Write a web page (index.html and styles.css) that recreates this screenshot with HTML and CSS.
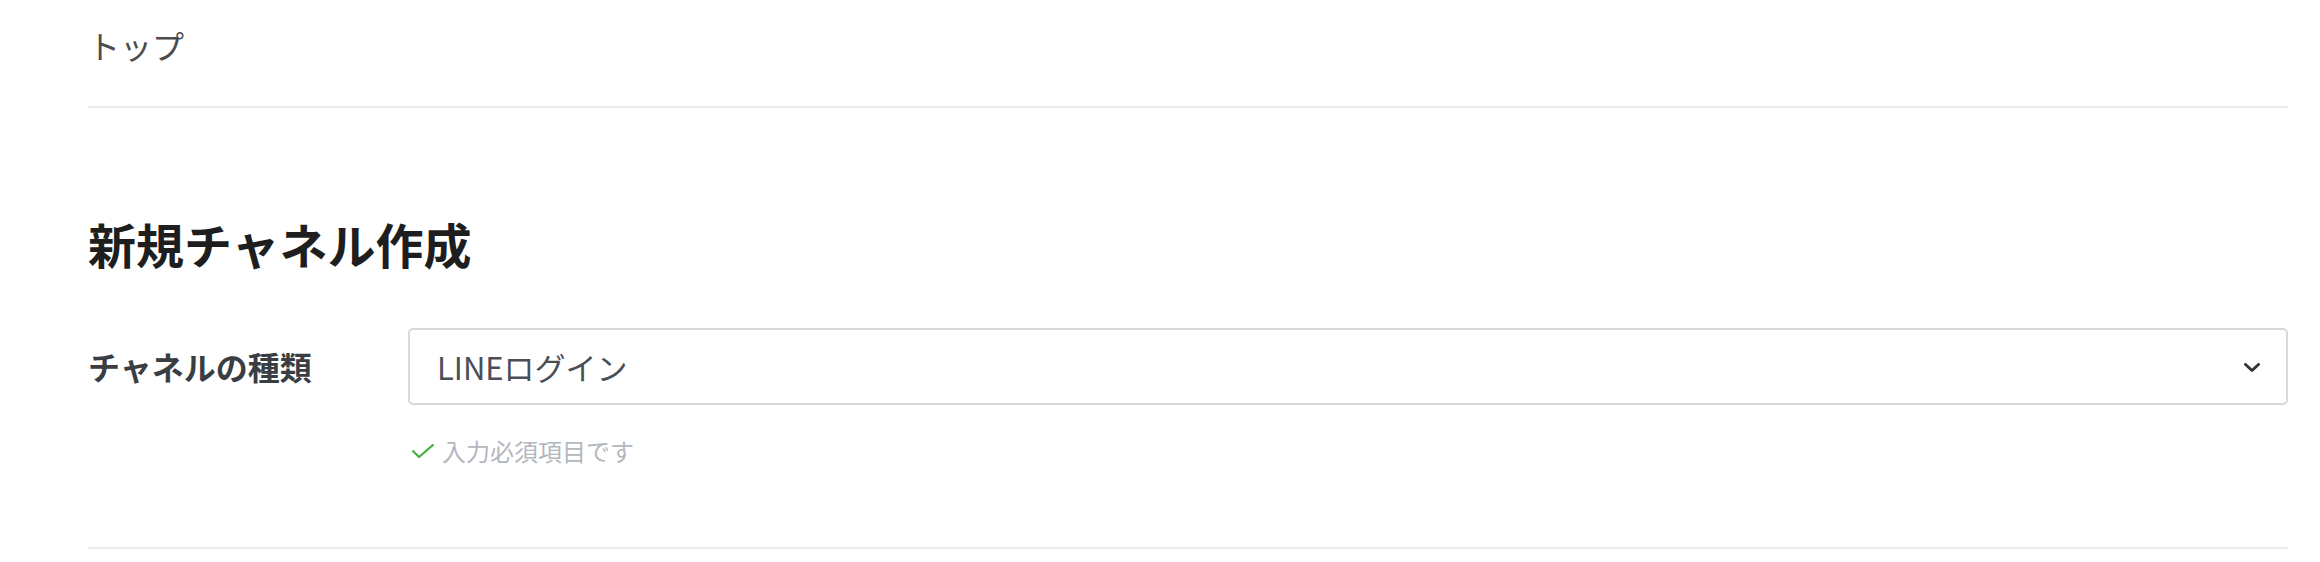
FILE: index.html
```html
<!DOCTYPE html>
<html lang="ja">
<head>
<meta charset="utf-8">
<title>新規チャネル作成</title>
<link rel="stylesheet" href="styles.css">
</head>
<body>
<div class="page">
  <nav class="breadcrumb"><span class="crumb">トップ</span></nav>
  <h1 class="title">新規チャネル作成</h1>
  <div class="form-row">
    <div class="label">チャネルの種類</div>
    <div class="field">
      <div class="select">
        <span class="select-value">LINEログイン</span>
        <svg class="chevron" width="16" height="10" viewBox="0 0 16 10"><path d="M1.5 1.5 L8 7.5 L14.5 1.5" fill="none" stroke="#33373d" stroke-width="3" stroke-linecap="round" stroke-linejoin="round"/></svg>
      </div>
      <div class="hint">
        <svg class="check" width="24" height="16" viewBox="0 0 24 16"><path d="M1.5 7.5 L8 14 L22.5 1.5" fill="none" stroke="#45b03f" stroke-width="2.2"/></svg>
        <span>入力必須項目です</span>
      </div>
    </div>
  </div>
  <div class="divider"></div>
</div>
</body>
</html>
```

FILE: styles.css
```css
html, body {
  margin: 0;
  padding: 0;
  background: #ffffff;
}
body {
  font-family: "Noto Sans CJK JP", "Noto Sans", sans-serif;
}
.page {
  padding: 0 32px 0 88px;
}
.breadcrumb {
  padding: 23px 0 38px;
  border-bottom: 2px solid #ebebeb;
}
.crumb {
  display: block;
  font-size: 32px;
  line-height: 45px;
  color: #4b4b4b;
}
.title {
  margin: 99px 0 0;
  font-size: 48px;
  line-height: 72px;
  font-weight: 700;
  color: #1e1e1e;
}
.form-row {
  display: flex;
  margin-top: 49px;
}
.label {
  width: 320px;
  flex: none;
  height: 75px;
  display: flex;
  align-items: center;
  font-size: 32px;
  font-weight: 700;
  color: #3a3d42;
}
.field {
  flex: 1;
}
.select {
  height: 77px;
  box-sizing: border-box;
  border: 2px solid #d5d8dc;
  border-radius: 5px;
  display: flex;
  align-items: center;
  justify-content: space-between;
  padding: 0 26px 0 27px;
}
.select-value {
  font-size: 31px;
  color: #4a4f57;
}
.chevron {
  display: block;
  margin-top: 2px;
}
.hint {
  margin-top: 26px;
  display: flex;
  align-items: center;
  gap: 7px;
  padding-left: 3px;
  font-size: 24px;
  line-height: 39px;
  color: #b3b7be;
}
.check {
  display: block;
}
.divider {
  margin-top: 77px;
  height: 2px;
  background: #ebebeb;
}
```
